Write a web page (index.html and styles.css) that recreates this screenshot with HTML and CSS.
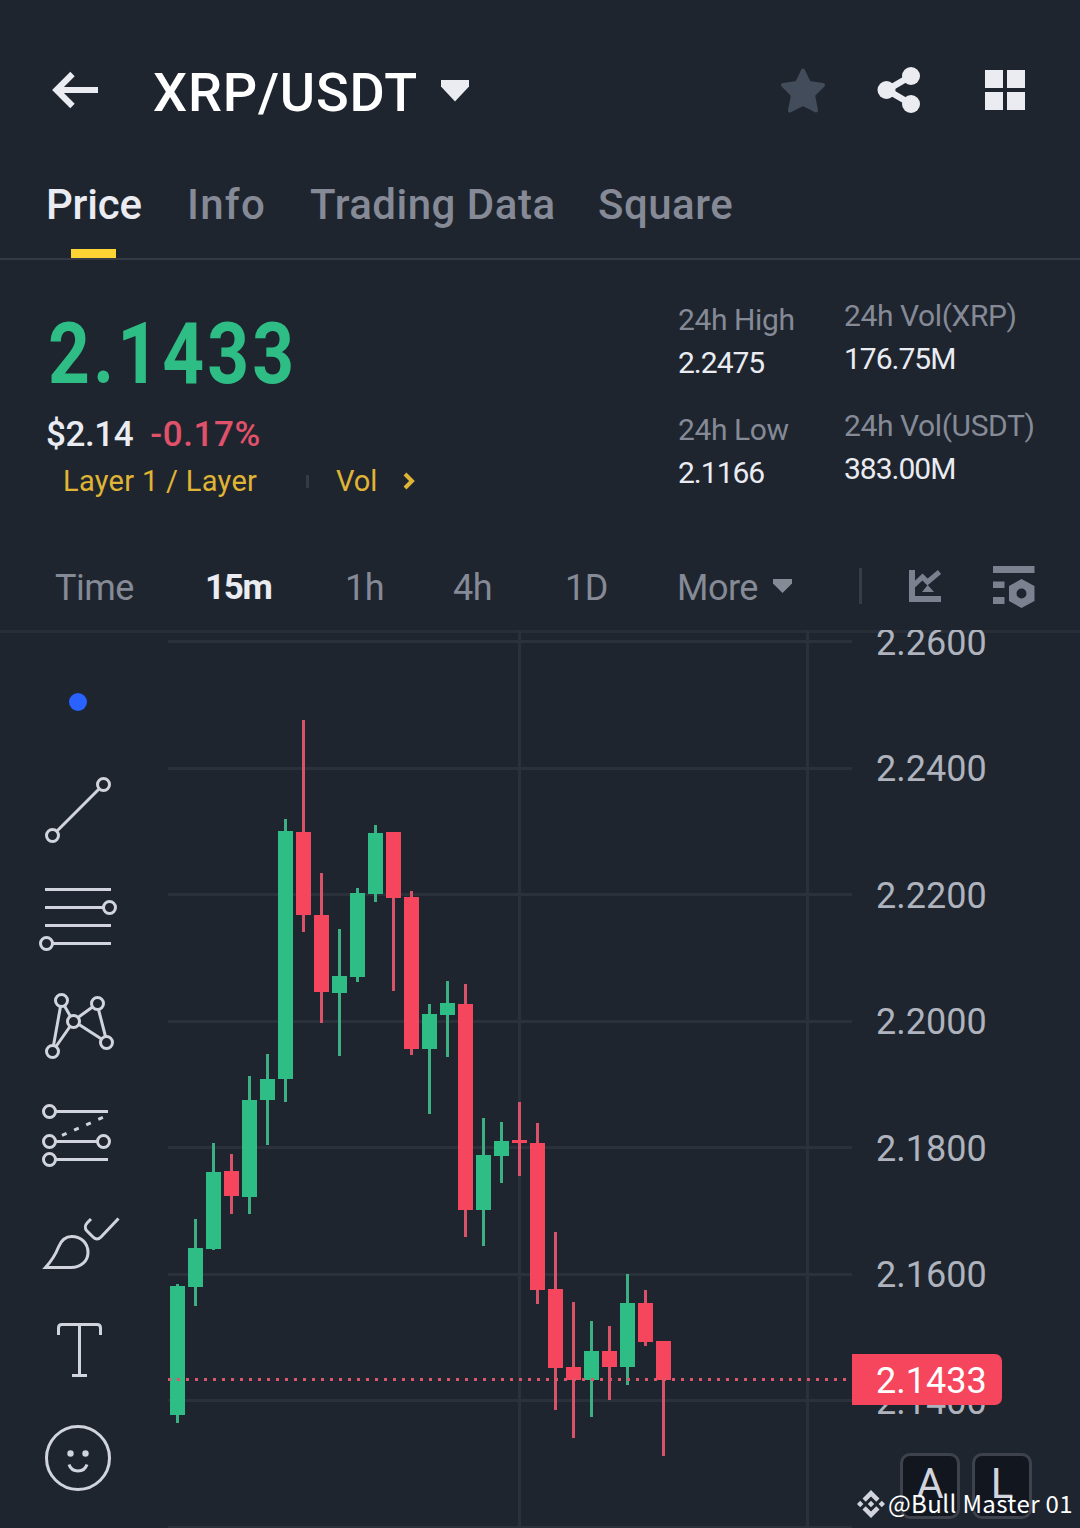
FILE: index.html
```html
<!DOCTYPE html>
<html lang="en">
<head>
  <meta charset="UTF-8" />
  <meta name="viewport" content="width=device-width, initial-scale=1" />
  <title>XRP/USDT</title>
  <link rel="stylesheet" href="styles.css">
</head>
<body>

  <header class="topbar">
    <svg class="back" width="48" height="40" viewBox="0 0 48 40"><path d="M5 20H47M21.500 4L5.500 20L21.500 36" fill="none" stroke="#eaecf2" stroke-width="6.200"/></svg>
    <h1>XRP/USDT</h1>
    <svg class="caret" width="28" height="22" viewBox="0 0 28 22"><path d="M0 0H28V6.500L14 21.500L0 6.500Z" fill="#eaecf2"/></svg>
    <div class="actions">
      <svg width="46" height="48" viewBox="0 0 46 48"><path d="M23 4.500L29 17L43 19L33 29L36 44.500L23 38L10 44.500L13 29L3 19L17 17Z" fill="#434c5a" stroke="#434c5a" stroke-width="4" stroke-linejoin="round"/></svg>
      <svg width="44" height="46" viewBox="0 0 44 46"><path d="M34 9L10 23L34 37" fill="none" stroke="#eaecf2" stroke-width="6.500"/><g fill="#eaecf2"><circle cx="34" cy="9" r="9"/><circle cx="9.500" cy="23" r="9"/><circle cx="34" cy="37" r="9"/></g></svg>
      <svg width="40" height="40" viewBox="0 0 40 40"><path d="M0 0H18V18H0ZM22 0H40V18H22ZM0 22H18V40H0ZM22 22H40V40H22Z" fill="#eaecf2"/></svg>
    </div>
  </header>

  <nav class="tabs">
    <a class="active">Price</a>
    <a class="info">Info</a>
    <a>Trading Data</a>
    <a>Square</a>
  </nav>

  <section class="summary">
    <div class="quote">
      <div class="price">2.1433</div>
      <div class="change"><span>$2.14</span><span class="down">-0.17%</span></div>
      <div class="tags">
        <span class="tag-layer">Layer 1 / Layer</span>
        <i></i>
        <span>Vol</span>
        <svg width="12" height="18" viewBox="0 0 12 18"><path d="M2 2L9 9L2 16" fill="none" stroke="#e0b434" stroke-width="4"/></svg>
      </div>
    </div>
    <dl class="stats">
      <dt>24h High</dt><dd>2.2475</dd>
      <dt>24h Low</dt><dd>2.1166</dd>
    </dl>
    <dl class="stats volume">
      <dt>24h Vol(XRP)</dt><dd>176.75M</dd>
      <dt>24h Vol(USDT)</dt><dd>383.00M</dd>
    </dl>
  </section>

  <div class="intervals">
    <span>Time</span>
    <span class="active">15m</span>
    <span>1h</span>
    <span>4h</span>
    <span>1D</span>
    <span class="more">More</span>
    <svg width="19" height="14" viewBox="0 0 19 14"><path d="M0 0H19V4.500L9.500 14L0 4.500Z" fill="#858a96"/></svg>
    <i></i>
    <svg width="33" height="33" viewBox="0 0 33 33" fill="#7b818e"><path d="M0 0H6V26H32V32H0Z"/><path d="M4 16L13.500 7L18.500 12L30.500 2" fill="none" stroke="#7b818e" stroke-width="5"/><path d="M18.700 15L25 22H13Z"/></svg>
    <svg width="42" height="43" viewBox="0 0 42 43"><path d="M0 1H41.500V8H0ZM0 16.500H11.500V23H0ZM0 32H11.500V39H0ZM28.500 14L41.500 21V36L28.500 43L16 36V21ZM28.500 23.500A5 5 0 1 0 28.500 33.500A5 5 0 1 0 28.500 23.500Z" fill="#7b818e" fill-rule="evenodd"/></svg>
  </div>

  <main class="chart">
    <div class="tools">
      <svg viewBox="0 0 156 108"><circle class="dot" cx="78" cy="54" r="9"/></svg>
      <svg viewBox="0 0 156 108"><circle cx="103.500" cy="28.500" r="6"/><circle cx="52.500" cy="79.500" r="6"/><path d="M57 75L99 33"/></svg>
      <svg viewBox="0 0 156 108"><path d="M45 25.500H111M45 43.500H103M45 61.500H111M53 79.500H111"/><circle cx="109.500" cy="43.500" r="6"/><circle cx="46.500" cy="79.500" r="6"/></svg>
      <svg viewBox="0 0 156 108"><circle cx="61.500" cy="28.500" r="6"/><circle cx="97.500" cy="31.500" r="6"/><circle cx="73.500" cy="49.500" r="6"/><circle cx="52.500" cy="79.500" r="6"/><circle cx="106.500" cy="70.500" r="6"/><path d="M60.500 34.500L53.500 73.500M64.500 34L70.500 44.500M70 54.500L56 74.500M78 45.500L92.500 35M79 52.500L101.500 67M98.500 37.500L105.500 64.500"/></svg>
      <svg viewBox="0 0 156 108"><circle cx="49.500" cy="31.500" r="6"/><circle cx="49.500" cy="61.500" r="6"/><circle cx="103.500" cy="61.500" r="6"/><circle cx="49.500" cy="79.500" r="6"/><path d="M56 31.500H108M56 61.500H97M56 79.500H108"/><path d="M62 55.300L104 37" stroke-dasharray="5 8.200"/></svg>
      <svg viewBox="0 0 156 108"><path d="M45.500 79.600H71C81 79.600 88 73 88 64.500C88 55 81 48.500 71.700 48.500C64 48.500 60.500 54 58.500 59C56 65.500 50 74.500 45.500 79.600Z"/><path d="M91 31L87.500 34.500C85 37 84.500 40.500 87 43L93 49C95.500 51.500 98.500 51.500 101 49L118.500 30.500"/></svg>
      <svg viewBox="0 0 156 108"><path d="M58.500 39V32Q58.500 28.500 62 28.500H97Q100.500 28.500 100.500 32V39M79.500 28.500V79.500M72 79.500H87"/></svg>
      <svg viewBox="0 0 156 108"><circle cx="78" cy="54" r="31.500"/><circle class="eye" cx="70.500" cy="49.500" r="3.200"/><circle class="eye" cx="85.500" cy="49.500" r="3.200"/><path d="M69 60.500A9.500 9.500 0 0 0 87 60.500"/></svg>
    </div>

    <svg class="candles" id="candles" viewBox="168 630 684 898"></svg>

    <div class="axis">
      <span>2.2600</span>
      <span>2.2400</span>
      <span>2.2200</span>
      <span>2.2000</span>
      <span>2.1800</span>
      <span>2.1600</span>
      <span>2.1400</span>
    </div>

    <div class="last-price">2.1433</div>
    <div class="scale-buttons"><button>A</button><button>L</button></div>
    <div class="watermark">
      <svg width="28" height="28" viewBox="0 0 28 28" fill="#d1d4dc"><path d="M14 0L22.500 8.500L19.300 11.700L14 6.400L8.700 11.700L5.500 8.500ZM14 28L22.500 19.500L19.300 16.300L14 21.600L8.700 16.300L5.500 19.500ZM3.200 10.800L6.400 14L3.200 17.200L0 14ZM24.800 10.800L28 14L24.800 17.200L21.600 14ZM14 10.800L17.200 14L14 17.200L10.800 14Z"/></svg>
      <span>@Bull Master 01</span>
    </div>
  </main>

  <script>
    const svg = document.getElementById('candles');

    // [direction, high, body top, body bottom, low]
    const candles = [
      ['up', 1284, 1286, 1415, 1423],
      ['up', 1219, 1248, 1287, 1306],
      ['up', 1143, 1172, 1249, 1250],
      ['down', 1154, 1171, 1196, 1214],
      ['up', 1076, 1100, 1197, 1214],
      ['up', 1054, 1079, 1100, 1145],
      ['up', 819, 831, 1079, 1102],
      ['down', 720, 832, 915, 932],
      ['down', 873, 915, 992, 1023],
      ['up', 929, 976, 993, 1056],
      ['up', 888, 893, 977, 982],
      ['up', 825, 833, 894, 902],
      ['down', 832, 832, 898, 991],
      ['down', 891, 897, 1049, 1055],
      ['up', 1004, 1014, 1049, 1114],
      ['up', 981, 1003, 1015, 1057],
      ['down', 984, 1004, 1210, 1237],
      ['up', 1118, 1155, 1210, 1246],
      ['up', 1122, 1141, 1156, 1183],
      ['down', 1102, 1140, 1143, 1176],
      ['down', 1123, 1143, 1290, 1304],
      ['down', 1232, 1289, 1368, 1410],
      ['down', 1302, 1367, 1380, 1438],
      ['up', 1321, 1351, 1380, 1417],
      ['down', 1326, 1351, 1367, 1400],
      ['up', 1274, 1303, 1367, 1385],
      ['down', 1290, 1303, 1342, 1346],
      ['down', 1341, 1341, 1380, 1456]
    ];

    function rect(cls, x, y, width, height) {
      return `<rect class="${cls}" x="${x}" y="${y}" width="${width}" height="${height}"/>`;
    }

    let out = '';
    [640, 767, 893, 1020, 1146, 1273, 1399, 1526].forEach(y => {
      out += rect('grid', 168, y, 684, 3);
    });
    [518, 806].forEach(x => {
      out += rect('grid', x, 630, 3, 898);
    });
    candles.forEach(([dir, high, top, bottom, low], i) => {
      const x = 170 + i * 18;
      out += rect(`wick-${dir}`, x + 6, high, 3, low - high);
      out += rect(dir, x, top, 15, bottom - top);
    });
    out += '<path class="last-line" d="M168 1379.5H850"/>';
    svg.innerHTML = out;
  </script>

</body>
</html>
```
FILE: styles.css
```css
* {
  box-sizing: border-box;
}
body {
  margin: 0;
  width: 1080px;
  height: 1528px;
  overflow: hidden;
  background: #1e252f;
  color: #eaecf2;
  font-family: Roboto, "Liberation Sans", sans-serif;
}
svg {
  display: block;
  flex: none;
}
.topbar {
  display: flex;
  align-items: center;
  height: 180px;
  padding: 0 55px 0 51px;
}
h1 {
  margin: 5px 0 0 54px;
  width: 264px;
  color: #fff;
  font-size: 54px;
  line-height: 60px;
  font-weight: 500;
  letter-spacing: 0.8px;
  white-space: nowrap;
}
.caret {
  margin: 2px 0 0 24px;
}
.actions {
  display: flex;
  align-items: center;
  margin-left: auto;
}
.actions svg:nth-child(2) {
  margin: 0 64px 0 51px;
}
.tabs {
  display: grid;
  grid-template-columns: 141px 123px 288px 160px;
  height: 80px;
  padding-left: 46px;
  border-bottom: 2px solid #333a44;
  color: #858a96;
  font-size: 42px;
  line-height: 50px;
  font-weight: 500;
  letter-spacing: 0.5px;
  white-space: nowrap;
}
.tabs .active {
  color: #eaecf2;
  letter-spacing: -0.2px;
}
.tabs .active::after {
  content: "";
  display: block;
  width: 45px;
  height: 9px;
  margin: 19px 0 0 25px;
  background: #fcd535;
}
.tabs .info {
  letter-spacing: 1.3px;
}
.summary {
  display: flex;
  height: 282px;
  padding-top: 38px;
}
.quote {
  width: 678px;
  padding: 11px 0 0 46px;
}
.price {
  width: 300px;
  margin-left: 2px;
  color: #2ebd85;
  font-size: 86px;
  line-height: 90px;
  font-weight: 700;
  letter-spacing: 3.6px;
  transform: scaleX(0.85);
  transform-origin: 0 0;
}
.change {
  display: flex;
  margin-top: 18px;
  font-size: 35px;
  line-height: 36px;
  font-weight: 500;
  letter-spacing: -0.4px;
}
.change .down {
  margin-left: 17px;
  color: #e0516a;
  letter-spacing: 0.6px;
}
.tags {
  display: flex;
  align-items: center;
  margin-top: 10px;
  padding-left: 17px;
  color: #e0b434;
  font-size: 29px;
  line-height: 36px;
}
.tag-layer {
  width: 243px;
  letter-spacing: 0.3px;
}
.tags i {
  width: 3px;
  height: 13px;
  margin-right: 27px;
  background: #343b46;
}
.tags svg {
  margin-left: 26px;
}
.stats {
  width: 166px;
  margin: 0;
  font-size: 30px;
  white-space: nowrap;
}
.stats dt {
  color: #858a96;
  line-height: 43px;
  letter-spacing: -0.4px;
}
.stats dd {
  margin: 0 0 24px;
  line-height: 43px;
  letter-spacing: -1px;
}
.volume {
  margin-top: -4px;
}
.intervals {
  display: grid;
  grid-template-columns: 150px 140px 108px 112px 112px 96px 86px 50px 84px 42px;
  align-items: center;
  height: 88px;
  padding-left: 55px;
  color: #858a96;
  font-size: 36px;
  line-height: 40px;
  letter-spacing: -0.5px;
}
.intervals .active {
  color: #eaecf2;
  font-size: 35px;
  font-weight: 700;
  letter-spacing: -1.3px;
}
.intervals span {
  padding-top: 4px;
}
.intervals i {
  width: 3px;
  height: 36px;
  background: #363d48;
}
.chart {
  position: relative;
  display: flex;
  height: 898px;
  overflow: hidden;
  box-shadow: inset 0 3px #272e38;
}
.tools {
  width: 168px;
  padding-top: 18px;
}
.tools svg {
  width: 156px;
  height: 108px;
  fill: none;
  stroke: #d1d4dc;
  stroke-width: 3;
}
.tools .dot {
  fill: #2962ff;
  stroke: none;
}
.tools .eye {
  fill: #d1d4dc;
  stroke: none;
}
.candles {
  width: 684px;
  height: 898px;
}
.grid {
  fill: #2a313b;
}
.up {
  fill: #2ebd85;
}
.wick-up {
  fill: #3cb083;
}
.wick-down {
  fill: #da5268;
}
.candles .down {
  fill: #f6465d;
}
.last-line {
  fill: none;
  stroke: #dc566b;
  stroke-width: 3;
  stroke-dasharray: 3 6;
}
.axis {
  display: flex;
  flex-direction: column;
  margin-top: -50.5px;
  padding-left: 24px;
  color: #afb3bd;
  font-size: 36px;
}
.axis span {
  flex: none;
  height: 126.5px;
  line-height: 126.5px;
}
.last-price {
  position: absolute;
  left: 852px;
  top: 724px;
  width: 150px;
  height: 51px;
  padding-left: 24px;
  border-radius: 0 7px 7px 0;
  background: #f6465d;
  color: #fff;
  font-size: 36px;
  line-height: 55px;
}
.scale-buttons {
  position: absolute;
  left: 900px;
  top: 823px;
  display: flex;
  gap: 12px;
}
.scale-buttons button {
  width: 60px;
  height: 66px;
  padding: 0 0 4px;
  border: 3px solid #3e424c;
  border-radius: 10px;
  background: #12161f;
  color: #d1d4dc;
  font-family: inherit;
  font-size: 42px;
  line-height: 50px;
}
.watermark {
  position: absolute;
  left: 857px;
  top: 857px;
  display: flex;
  align-items: center;
  gap: 3px;
  color: #fff;
  font-family: "Noto Sans CJK SC", "Noto Sans", sans-serif;
  font-size: 24px;
  line-height: 36px;
  letter-spacing: 0.4px;
  white-space: nowrap;
  text-shadow: 1px 1px 1px #1f2630;
}
.watermark span {
  margin-top: -2px;
}
```
